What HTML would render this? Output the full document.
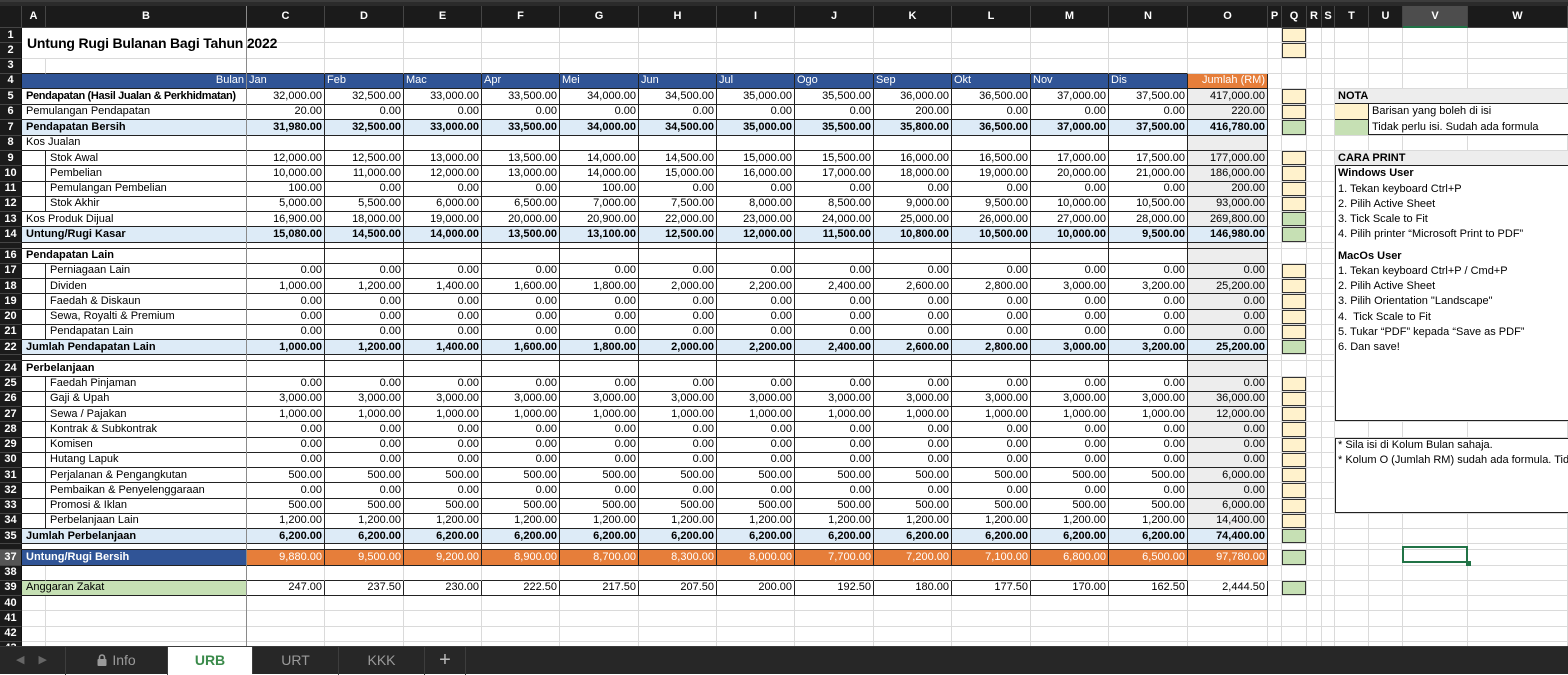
<!DOCTYPE html>
<html><head><meta charset="utf-8">
<style>
*{box-sizing:border-box}
body{margin:0;width:1568px;height:674px;overflow:hidden;background:#fff;font-family:"Liberation Sans",sans-serif;position:relative}
#top{position:absolute;left:0;top:0;width:1568px;height:6px;background:#2b2b2b;border-top:2px solid #3c3c3c}
table{position:absolute;left:0;top:6px;width:1568px;table-layout:fixed;border-collapse:separate;border-spacing:0}
td{border-right:1px solid #dadada;border-bottom:1px solid #dadada;padding:0 2px 0 4px;white-space:nowrap;overflow:hidden;font-size:11px;line-height:13px;color:#000}
tr{height:15.25px}
tr.t{height:6px}
tr.t td{font-size:0;line-height:0}
tr.hd{height:22px}
tr.hd td{background:#1b1b1b;color:#fff;font-weight:bold;text-align:center;border-right:1px solid #454545;border-bottom:1px solid #454545;font-size:11px;padding:0}
td.rh{background:#1b1b1b;color:#fff;font-weight:bold;text-align:center;border-right:1px solid #111;border-bottom:1px solid #454545;padding:0;font-size:11px}
tr.d td:nth-child(n+2):nth-child(-n+16){border-right-color:#222;border-bottom-color:#222}
tr.d td:nth-child(n+4):nth-child(-n+16){text-align:right}
tr.d td:nth-child(16){background:#ededed}
tr.m td:nth-child(n+2):nth-child(-n+15){border-right-color:#222;border-bottom-color:#222}
tr.m td:nth-child(n+3):nth-child(-n+15){text-align:right}
tr.m td:nth-child(15){background:#ededed}
tr.lb td:nth-child(n+2):nth-child(-n+15){background:#ddebf7}
tr.bo td:nth-child(-n+15){font-weight:bold}
tr.r3 td:nth-child(n+2):nth-child(-n+15){border-bottom-color:#222}
.y{background:#fff2cc;box-shadow:inset 0 0 0 1px #333}
.g{background:#c6e0b4;box-shadow:inset 0 0 0 1px #333}
td.box{padding:0;vertical-align:top;box-shadow:inset 1px 1px 0 #222,inset 0 -1px 0 #222;border-right:none}
.ln{height:15.25px;line-height:15px;padding-left:3px;font-size:11px;white-space:nowrap}
#frz{position:absolute;left:246px;top:6px;width:1px;height:640px;background:#8a8a8a}
#sel{position:absolute;left:1402px;top:546px;width:66px;height:17px;border:2px solid #217346}
#sel:after{content:"";position:absolute;right:-5px;bottom:-5px;width:5px;height:5px;background:#217346}
#tabs{position:absolute;left:0;top:646px;width:1568px;height:28px;background:#272727;border-top:1px solid #3a3a3a;font-size:14px;color:#9a9a9a}
#tabs div{position:absolute;top:0;height:28px;line-height:27px;text-align:center;border-right:1px solid #3d3d3d}
</style></head><body>
<div id="top"></div>
<table>
<colgroup><col style="width:22px"><col style="width:24px"><col style="width:201px"><col style="width:78px"><col style="width:79px"><col style="width:78px"><col style="width:78px"><col style="width:79px"><col style="width:78px"><col style="width:78px"><col style="width:79px"><col style="width:78px"><col style="width:79px"><col style="width:78px"><col style="width:79px"><col style="width:80px"><col style="width:14px"><col style="width:25px"><col style="width:15px"><col style="width:13px"><col style="width:34px"><col style="width:34px"><col style="width:65px"><col style="width:100px"></colgroup>
<tr class="hd"><td style="background:#1b1b1b"></td><td>A</td><td>B</td><td>C</td><td>D</td><td>E</td><td>F</td><td>G</td><td>H</td><td>I</td><td>J</td><td>K</td><td>L</td><td>M</td><td>N</td><td>O</td><td>P</td><td>Q</td><td>R</td><td>S</td><td>T</td><td>U</td><td style="background:#4d4d4d;border-bottom:2px solid #217346">V</td><td>W</td></tr>
<tr><td class="rh">1</td><td colspan="2" rowspan="2" style="overflow:visible;font-size:14px;font-weight:bold;padding-left:5px;line-height:28px;letter-spacing:-0.2px">Untung Rugi Bulanan Bagi Tahun 2022</td><td></td><td></td><td></td><td></td><td></td><td></td><td></td><td></td><td></td><td></td><td></td><td></td><td></td><td></td><td class="y"></td><td></td><td></td><td></td><td></td><td></td><td></td></tr>
<tr><td class="rh">2</td><td></td><td></td><td></td><td></td><td></td><td></td><td></td><td></td><td></td><td></td><td></td><td></td><td></td><td></td><td class="y"></td><td></td><td></td><td></td><td></td><td></td><td></td></tr>
<tr class="r3"><td class="rh">3</td><td></td><td></td><td></td><td></td><td></td><td></td><td></td><td></td><td></td><td></td><td></td><td></td><td></td><td></td><td></td><td></td><td></td><td></td><td></td><td></td><td></td><td></td><td></td></tr>
<tr class="m" style="color:#fff"><td class="rh">4</td><td colspan="2" style="background:#305496;color:#fff;text-align:right">Bulan</td><td style="background:#305496;color:#fff;text-align:left;padding-left:2px">Jan</td><td style="background:#305496;color:#fff;text-align:left;padding-left:2px">Feb</td><td style="background:#305496;color:#fff;text-align:left;padding-left:2px">Mac</td><td style="background:#305496;color:#fff;text-align:left;padding-left:2px">Apr</td><td style="background:#305496;color:#fff;text-align:left;padding-left:2px">Mei</td><td style="background:#305496;color:#fff;text-align:left;padding-left:2px">Jun</td><td style="background:#305496;color:#fff;text-align:left;padding-left:2px">Jul</td><td style="background:#305496;color:#fff;text-align:left;padding-left:2px">Ogo</td><td style="background:#305496;color:#fff;text-align:left;padding-left:2px">Sep</td><td style="background:#305496;color:#fff;text-align:left;padding-left:2px">Okt</td><td style="background:#305496;color:#fff;text-align:left;padding-left:2px">Nov</td><td style="background:#305496;color:#fff;text-align:left;padding-left:2px">Dis</td><td style="background:#e67e3a;color:#fff">Jumlah (RM)</td><td></td><td></td><td></td><td></td><td></td><td></td><td></td><td></td></tr>
<tr class="m"><td class="rh">5</td><td colspan="2" style="font-weight:bold;letter-spacing:-0.35px">Pendapatan (Hasil Jualan &amp; Perkhidmatan)</td><td>32,000.00</td><td>32,500.00</td><td>33,000.00</td><td>33,500.00</td><td>34,000.00</td><td>34,500.00</td><td>35,000.00</td><td>35,500.00</td><td>36,000.00</td><td>36,500.00</td><td>37,000.00</td><td>37,500.00</td><td>417,000.00</td><td></td><td class="y"></td><td></td><td></td><td class="box" colspan="4" rowspan="3"><div class="ln" style="background:#ededed;font-weight:bold;border-bottom:1px solid #222">NOTA</div><div class="ln" style="padding:0;display:flex"><div style="width:34px;background:#fff2cc;border-right:1px solid #222;border-bottom:1px solid #222"></div><div style="padding-left:3px">Barisan yang boleh di isi</div></div><div class="ln" style="padding:0;display:flex"><div style="width:34px;background:#c6e0b4;border-right:1px solid #222"></div><div style="padding-left:3px">Tidak perlu isi. Sudah ada formula</div></div></td></tr>
<tr class="m"><td class="rh">6</td><td colspan="2">Pemulangan Pendapatan</td><td>20.00</td><td>0.00</td><td>0.00</td><td>0.00</td><td>0.00</td><td>0.00</td><td>0.00</td><td>0.00</td><td>200.00</td><td>0.00</td><td>0.00</td><td>0.00</td><td>220.00</td><td></td><td class="y"></td><td></td><td></td></tr>
<tr class="m lb bo"><td class="rh">7</td><td colspan="2">Pendapatan Bersih</td><td>31,980.00</td><td>32,500.00</td><td>33,000.00</td><td>33,500.00</td><td>34,000.00</td><td>34,500.00</td><td>35,000.00</td><td>35,500.00</td><td>35,800.00</td><td>36,500.00</td><td>37,000.00</td><td>37,500.00</td><td>416,780.00</td><td></td><td class="g"></td><td></td><td></td></tr>
<tr class="m"><td class="rh">8</td><td colspan="2">Kos Jualan</td><td></td><td></td><td></td><td></td><td></td><td></td><td></td><td></td><td></td><td></td><td></td><td></td><td></td><td></td><td></td><td></td><td></td><td></td><td></td><td></td><td></td></tr>
<tr class="d"><td class="rh">9</td><td></td><td>Stok Awal</td><td>12,000.00</td><td>12,500.00</td><td>13,000.00</td><td>13,500.00</td><td>14,000.00</td><td>14,500.00</td><td>15,000.00</td><td>15,500.00</td><td>16,000.00</td><td>16,500.00</td><td>17,000.00</td><td>17,500.00</td><td>177,000.00</td><td></td><td class="y"></td><td></td><td></td><td class="box" colspan="4" rowspan="19"><div class="ln" style="background:#ededed;font-weight:bold;border-bottom:1px solid #222">CARA PRINT</div><div class="ln" style="font-weight:bold">Windows User</div><div class="ln">1. Tekan keyboard Ctrl+P</div><div class="ln">2. Pilih Active Sheet</div><div class="ln">3. Tick Scale to Fit</div><div class="ln">4. Pilih printer “Microsoft Print to PDF”</div><div style="height:6px"></div><div class="ln" style="font-weight:bold">MacOs User</div><div class="ln">1. Tekan keyboard Ctrl+P / Cmd+P</div><div class="ln">2. Pilih Active Sheet</div><div class="ln">3. Pilih Orientation "Landscape"</div><div class="ln">4.&nbsp; Tick Scale to Fit</div><div class="ln">5. Tukar “PDF” kepada “Save as PDF”</div><div class="ln">6. Dan save!</div></td></tr>
<tr class="d"><td class="rh">10</td><td></td><td>Pembelian</td><td>10,000.00</td><td>11,000.00</td><td>12,000.00</td><td>13,000.00</td><td>14,000.00</td><td>15,000.00</td><td>16,000.00</td><td>17,000.00</td><td>18,000.00</td><td>19,000.00</td><td>20,000.00</td><td>21,000.00</td><td>186,000.00</td><td></td><td class="y"></td><td></td><td></td></tr>
<tr class="d"><td class="rh">11</td><td></td><td>Pemulangan Pembelian</td><td>100.00</td><td>0.00</td><td>0.00</td><td>0.00</td><td>100.00</td><td>0.00</td><td>0.00</td><td>0.00</td><td>0.00</td><td>0.00</td><td>0.00</td><td>0.00</td><td>200.00</td><td></td><td class="y"></td><td></td><td></td></tr>
<tr class="d"><td class="rh">12</td><td></td><td>Stok Akhir</td><td>5,000.00</td><td>5,500.00</td><td>6,000.00</td><td>6,500.00</td><td>7,000.00</td><td>7,500.00</td><td>8,000.00</td><td>8,500.00</td><td>9,000.00</td><td>9,500.00</td><td>10,000.00</td><td>10,500.00</td><td>93,000.00</td><td></td><td class="y"></td><td></td><td></td></tr>
<tr class="m"><td class="rh">13</td><td colspan="2">Kos Produk Dijual</td><td>16,900.00</td><td>18,000.00</td><td>19,000.00</td><td>20,000.00</td><td>20,900.00</td><td>22,000.00</td><td>23,000.00</td><td>24,000.00</td><td>25,000.00</td><td>26,000.00</td><td>27,000.00</td><td>28,000.00</td><td>269,800.00</td><td></td><td class="g"></td><td></td><td></td></tr>
<tr class="m lb bo"><td class="rh">14</td><td colspan="2">Untung/Rugi Kasar</td><td>15,080.00</td><td>14,500.00</td><td>14,000.00</td><td>13,500.00</td><td>13,100.00</td><td>12,500.00</td><td>12,000.00</td><td>11,500.00</td><td>10,800.00</td><td>10,500.00</td><td>10,000.00</td><td>9,500.00</td><td>146,980.00</td><td></td><td class="g"></td><td></td><td></td></tr>
<tr class="m t"><td class="rh"></td><td colspan="2"></td><td></td><td></td><td></td><td></td><td></td><td></td><td></td><td></td><td></td><td></td><td></td><td></td><td></td><td></td><td></td><td></td><td></td></tr>
<tr class="m bo"><td class="rh">16</td><td colspan="2">Pendapatan Lain</td><td></td><td></td><td></td><td></td><td></td><td></td><td></td><td></td><td></td><td></td><td></td><td></td><td></td><td></td><td></td><td></td><td></td></tr>
<tr class="d"><td class="rh">17</td><td></td><td>Perniagaan Lain</td><td>0.00</td><td>0.00</td><td>0.00</td><td>0.00</td><td>0.00</td><td>0.00</td><td>0.00</td><td>0.00</td><td>0.00</td><td>0.00</td><td>0.00</td><td>0.00</td><td>0.00</td><td></td><td class="y"></td><td></td><td></td></tr>
<tr class="d"><td class="rh">18</td><td></td><td>Dividen</td><td>1,000.00</td><td>1,200.00</td><td>1,400.00</td><td>1,600.00</td><td>1,800.00</td><td>2,000.00</td><td>2,200.00</td><td>2,400.00</td><td>2,600.00</td><td>2,800.00</td><td>3,000.00</td><td>3,200.00</td><td>25,200.00</td><td></td><td class="y"></td><td></td><td></td></tr>
<tr class="d"><td class="rh">19</td><td></td><td>Faedah &amp; Diskaun</td><td>0.00</td><td>0.00</td><td>0.00</td><td>0.00</td><td>0.00</td><td>0.00</td><td>0.00</td><td>0.00</td><td>0.00</td><td>0.00</td><td>0.00</td><td>0.00</td><td>0.00</td><td></td><td class="y"></td><td></td><td></td></tr>
<tr class="d"><td class="rh">20</td><td></td><td>Sewa, Royalti &amp; Premium</td><td>0.00</td><td>0.00</td><td>0.00</td><td>0.00</td><td>0.00</td><td>0.00</td><td>0.00</td><td>0.00</td><td>0.00</td><td>0.00</td><td>0.00</td><td>0.00</td><td>0.00</td><td></td><td class="y"></td><td></td><td></td></tr>
<tr class="d"><td class="rh">21</td><td></td><td>Pendapatan Lain</td><td>0.00</td><td>0.00</td><td>0.00</td><td>0.00</td><td>0.00</td><td>0.00</td><td>0.00</td><td>0.00</td><td>0.00</td><td>0.00</td><td>0.00</td><td>0.00</td><td>0.00</td><td></td><td class="y"></td><td></td><td></td></tr>
<tr class="m lb bo"><td class="rh">22</td><td colspan="2">Jumlah Pendapatan Lain</td><td>1,000.00</td><td>1,200.00</td><td>1,400.00</td><td>1,600.00</td><td>1,800.00</td><td>2,000.00</td><td>2,200.00</td><td>2,400.00</td><td>2,600.00</td><td>2,800.00</td><td>3,000.00</td><td>3,200.00</td><td>25,200.00</td><td></td><td class="g"></td><td></td><td></td></tr>
<tr class="m t"><td class="rh"></td><td colspan="2"></td><td></td><td></td><td></td><td></td><td></td><td></td><td></td><td></td><td></td><td></td><td></td><td></td><td></td><td></td><td></td><td></td><td></td></tr>
<tr class="m bo"><td class="rh">24</td><td colspan="2">Perbelanjaan</td><td></td><td></td><td></td><td></td><td></td><td></td><td></td><td></td><td></td><td></td><td></td><td></td><td></td><td></td><td></td><td></td><td></td></tr>
<tr class="d"><td class="rh">25</td><td></td><td>Faedah Pinjaman</td><td>0.00</td><td>0.00</td><td>0.00</td><td>0.00</td><td>0.00</td><td>0.00</td><td>0.00</td><td>0.00</td><td>0.00</td><td>0.00</td><td>0.00</td><td>0.00</td><td>0.00</td><td></td><td class="y"></td><td></td><td></td></tr>
<tr class="d"><td class="rh">26</td><td></td><td>Gaji &amp; Upah</td><td>3,000.00</td><td>3,000.00</td><td>3,000.00</td><td>3,000.00</td><td>3,000.00</td><td>3,000.00</td><td>3,000.00</td><td>3,000.00</td><td>3,000.00</td><td>3,000.00</td><td>3,000.00</td><td>3,000.00</td><td>36,000.00</td><td></td><td class="y"></td><td></td><td></td></tr>
<tr class="d"><td class="rh">27</td><td></td><td>Sewa / Pajakan</td><td>1,000.00</td><td>1,000.00</td><td>1,000.00</td><td>1,000.00</td><td>1,000.00</td><td>1,000.00</td><td>1,000.00</td><td>1,000.00</td><td>1,000.00</td><td>1,000.00</td><td>1,000.00</td><td>1,000.00</td><td>12,000.00</td><td></td><td class="y"></td><td></td><td></td></tr>
<tr class="d"><td class="rh">28</td><td></td><td>Kontrak &amp; Subkontrak</td><td>0.00</td><td>0.00</td><td>0.00</td><td>0.00</td><td>0.00</td><td>0.00</td><td>0.00</td><td>0.00</td><td>0.00</td><td>0.00</td><td>0.00</td><td>0.00</td><td>0.00</td><td></td><td class="y"></td><td></td><td></td><td></td><td></td><td></td><td></td></tr>
<tr class="d"><td class="rh">29</td><td></td><td>Komisen</td><td>0.00</td><td>0.00</td><td>0.00</td><td>0.00</td><td>0.00</td><td>0.00</td><td>0.00</td><td>0.00</td><td>0.00</td><td>0.00</td><td>0.00</td><td>0.00</td><td>0.00</td><td></td><td class="y"></td><td></td><td></td><td class="box" colspan="4" rowspan="5"><div class="ln">* Sila isi di Kolum Bulan sahaja.</div><div class="ln">* Kolum O (Jumlah RM) sudah ada formula. Tidak perlu isi.</div></td></tr>
<tr class="d"><td class="rh">30</td><td></td><td>Hutang Lapuk</td><td>0.00</td><td>0.00</td><td>0.00</td><td>0.00</td><td>0.00</td><td>0.00</td><td>0.00</td><td>0.00</td><td>0.00</td><td>0.00</td><td>0.00</td><td>0.00</td><td>0.00</td><td></td><td class="y"></td><td></td><td></td></tr>
<tr class="d"><td class="rh">31</td><td></td><td>Perjalanan &amp; Pengangkutan</td><td>500.00</td><td>500.00</td><td>500.00</td><td>500.00</td><td>500.00</td><td>500.00</td><td>500.00</td><td>500.00</td><td>500.00</td><td>500.00</td><td>500.00</td><td>500.00</td><td>6,000.00</td><td></td><td class="y"></td><td></td><td></td></tr>
<tr class="d"><td class="rh">32</td><td></td><td>Pembaikan &amp; Penyelenggaraan</td><td>0.00</td><td>0.00</td><td>0.00</td><td>0.00</td><td>0.00</td><td>0.00</td><td>0.00</td><td>0.00</td><td>0.00</td><td>0.00</td><td>0.00</td><td>0.00</td><td>0.00</td><td></td><td class="y"></td><td></td><td></td></tr>
<tr class="d"><td class="rh">33</td><td></td><td>Promosi &amp; Iklan</td><td>500.00</td><td>500.00</td><td>500.00</td><td>500.00</td><td>500.00</td><td>500.00</td><td>500.00</td><td>500.00</td><td>500.00</td><td>500.00</td><td>500.00</td><td>500.00</td><td>6,000.00</td><td></td><td class="y"></td><td></td><td></td></tr>
<tr class="d"><td class="rh">34</td><td></td><td>Perbelanjaan Lain</td><td>1,200.00</td><td>1,200.00</td><td>1,200.00</td><td>1,200.00</td><td>1,200.00</td><td>1,200.00</td><td>1,200.00</td><td>1,200.00</td><td>1,200.00</td><td>1,200.00</td><td>1,200.00</td><td>1,200.00</td><td>14,400.00</td><td></td><td class="y"></td><td></td><td></td><td></td><td></td><td></td><td></td></tr>
<tr class="m lb bo"><td class="rh">35</td><td colspan="2">Jumlah Perbelanjaan</td><td>6,200.00</td><td>6,200.00</td><td>6,200.00</td><td>6,200.00</td><td>6,200.00</td><td>6,200.00</td><td>6,200.00</td><td>6,200.00</td><td>6,200.00</td><td>6,200.00</td><td>6,200.00</td><td>6,200.00</td><td>74,400.00</td><td></td><td class="g"></td><td></td><td></td><td></td><td></td><td></td><td></td></tr>
<tr class="m t"><td class="rh"></td><td colspan="2"></td><td></td><td></td><td></td><td></td><td></td><td></td><td></td><td></td><td></td><td></td><td></td><td></td><td></td><td></td><td></td><td></td><td></td><td></td><td></td><td></td><td></td></tr>
<tr class="m"><td class="rh" style="background:#555">37</td><td colspan="2" style="background:#305496;color:#fff;font-weight:bold">Untung/Rugi Bersih</td><td style="background:#e67e3a;color:#fff">9,880.00</td><td style="background:#e67e3a;color:#fff">9,500.00</td><td style="background:#e67e3a;color:#fff">9,200.00</td><td style="background:#e67e3a;color:#fff">8,900.00</td><td style="background:#e67e3a;color:#fff">8,700.00</td><td style="background:#e67e3a;color:#fff">8,300.00</td><td style="background:#e67e3a;color:#fff">8,000.00</td><td style="background:#e67e3a;color:#fff">7,700.00</td><td style="background:#e67e3a;color:#fff">7,200.00</td><td style="background:#e67e3a;color:#fff">7,100.00</td><td style="background:#e67e3a;color:#fff">6,800.00</td><td style="background:#e67e3a;color:#fff">6,500.00</td><td style="background:#e67e3a;color:#fff">97,780.00</td><td></td><td class="g"></td><td></td><td></td><td></td><td></td><td></td><td></td></tr>
<tr class="r3"><td class="rh">38</td><td></td><td></td><td></td><td></td><td></td><td></td><td></td><td></td><td></td><td></td><td></td><td></td><td></td><td></td><td></td><td></td><td></td><td></td><td></td><td></td><td></td><td></td><td></td></tr>
<tr class="m"><td class="rh">39</td><td colspan="2" style="background:#c6e0b4">Anggaran Zakat</td><td>247.00</td><td>237.50</td><td>230.00</td><td>222.50</td><td>217.50</td><td>207.50</td><td>200.00</td><td>192.50</td><td>180.00</td><td>177.50</td><td>170.00</td><td>162.50</td><td style="background:#fff">2,444.50</td><td></td><td class="g"></td><td></td><td></td><td></td><td></td><td></td><td></td></tr>
<tr><td class="rh">40</td><td></td><td></td><td></td><td></td><td></td><td></td><td></td><td></td><td></td><td></td><td></td><td></td><td></td><td></td><td></td><td></td><td></td><td></td><td></td><td></td><td></td><td></td><td></td></tr>
<tr><td class="rh">41</td><td></td><td></td><td></td><td></td><td></td><td></td><td></td><td></td><td></td><td></td><td></td><td></td><td></td><td></td><td></td><td></td><td></td><td></td><td></td><td></td><td></td><td></td><td></td></tr>
<tr><td class="rh">42</td><td></td><td></td><td></td><td></td><td></td><td></td><td></td><td></td><td></td><td></td><td></td><td></td><td></td><td></td><td></td><td></td><td></td><td></td><td></td><td></td><td></td><td></td><td></td></tr>
<tr><td class="rh">43</td><td></td><td></td><td></td><td></td><td></td><td></td><td></td><td></td><td></td><td></td><td></td><td></td><td></td><td></td><td></td><td></td><td></td><td></td><td></td><td></td><td></td><td></td><td></td></tr>
</table>
<div id="frz"></div>
<div id="sel"></div>
<div id="tabs">
<div style="left:0;width:66px;color:#666;font-size:11px;letter-spacing:14px;padding-left:12px">◀▶</div>
<div style="left:66px;width:102px"><svg width="10" height="12" viewBox="0 0 10 12" style="vertical-align:-1px;margin-right:5px"><path d="M2.5 5V3.5a2.5 2.5 0 0 1 5 0V5" fill="none" stroke="#9a9a9a" stroke-width="1.6"/><rect x="0.5" y="5" width="9" height="7" rx="1" fill="#9a9a9a"/></svg>Info</div>
<div style="left:168px;width:85px;background:#fff;color:#3a8a4a;font-weight:bold;height:27px">URB</div>
<div style="left:253px;width:86px">URT</div>
<div style="left:339px;width:86px">KKK</div>
<div style="left:425px;width:41px;font-size:20px;color:#bbb">+</div>
</div>
</body></html>
